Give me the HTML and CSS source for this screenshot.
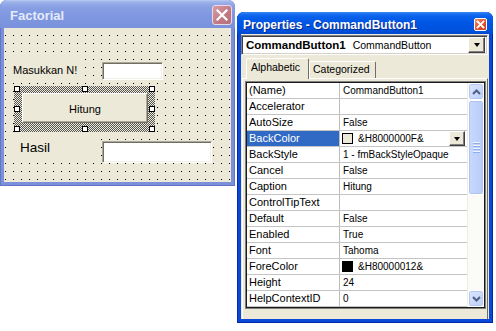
FILE: index.html
```html
<!DOCTYPE html>
<html>
<head>
<meta charset="utf-8">
<link rel="stylesheet" href="styles.css">
</head>
<body>
<div class="win win-form">
  <div class="titlebar tb-inactive">
    <span class="title title-form">Factorial</span>
    <span class="close close-big"><svg width="12" height="12" viewBox="0 0 12 12"><path d="M1.5 1.5L10.5 10.5M10.5 1.5L1.5 10.5" stroke="#fff" stroke-width="2.2" stroke-linecap="square"/></svg></span>
  </div>
  <div class="canvas">
    <div class="ctl lbl lbl-n">Masukkan N!</div>
    <div class="ctl textbox tb-n"></div>
    <div class="ctl sel">
      <div class="cmd">Hitung</div>
      <i class="hd hx0 hy0"></i><i class="hd hx1 hy0"></i><i class="hd hx2 hy0"></i>
      <i class="hd hx0 hy1"></i><i class="hd hx2 hy1"></i>
      <i class="hd hx0 hy2"></i><i class="hd hx1 hy2"></i><i class="hd hx2 hy2"></i>
    </div>
    <div class="ctl lbl lbl-hasil">Hasil</div>
    <div class="ctl textbox tb-hasil"></div>
  </div>
</div>

<div class="win win-props">
  <div class="titlebar tb-active">
    <span class="title title-props">Properties - CommandButton1</span>
    <span class="close close-small"><svg width="9" height="9" viewBox="0 0 9 9"><path d="M1.5 1.5L7.5 7.5M7.5 1.5L1.5 7.5" stroke="#fff" stroke-width="1.8" stroke-linecap="square"/></svg></span>
  </div>
  <div class="pbody">
    <div class="combo">
      <b class="combo-name">CommandButton1</b><span class="combo-type">CommandButton</span>
      <span class="ddbtn combo-dd"><i class="tri"></i></span>
    </div>
    <div class="tabs">
      <div class="tab active">Alphabetic</div>
      <div class="tab">Categorized</div>
    </div>
    <div class="panel">
      <div class="grid">
        <div class="grid-in">
          <div class="rows">
            <div class="row"><div class="k">(Name)</div><div class="v">CommandButton1</div></div>
            <div class="row"><div class="k">Accelerator</div><div class="v"></div></div>
            <div class="row"><div class="k">AutoSize</div><div class="v">False</div></div>
            <div class="row"><div class="k ksel">BackColor</div><div class="v vsw"><i class="sw sw-back"></i><span>&amp;H8000000F&amp;</span><span class="ddbtn val-dd"><i class="tri"></i></span></div></div>
            <div class="row"><div class="k">BackStyle</div><div class="v">1 - fmBackStyleOpaque</div></div>
            <div class="row"><div class="k">Cancel</div><div class="v">False</div></div>
            <div class="row"><div class="k">Caption</div><div class="v">Hitung</div></div>
            <div class="row"><div class="k">ControlTipText</div><div class="v"></div></div>
            <div class="row"><div class="k">Default</div><div class="v">False</div></div>
            <div class="row"><div class="k">Enabled</div><div class="v">True</div></div>
            <div class="row"><div class="k">Font</div><div class="v">Tahoma</div></div>
            <div class="row"><div class="k">ForeColor</div><div class="v vsw"><i class="sw sw-fore"></i><span>&amp;H80000012&amp;</span></div></div>
            <div class="row"><div class="k">Height</div><div class="v">24</div></div>
            <div class="row"><div class="k">HelpContextID</div><div class="v">0</div></div>
          </div>
          <div class="vscroll">
            <div class="sb-btn"><svg width="9" height="6" viewBox="0 0 9 6"><path d="M1 5L4.5 1.5L8 5" fill="none" stroke="#4D6185" stroke-width="2"/></svg></div>
            <div class="sb-thumb"><i></i><i></i><i></i><i></i></div>
            <div class="sb-track"></div>
            <div class="sb-btn"><svg width="9" height="6" viewBox="0 0 9 6"><path d="M1 1L4.5 4.5L8 1" fill="none" stroke="#4D6185" stroke-width="2"/></svg></div>
          </div>
        </div>
      </div>
    </div>
  </div>
</div>
</body>
</html>
```

FILE: styles.css
```css
* { box-sizing: border-box; }
html, body { margin: 0; padding: 0; background: #fff; }
body {
  width: 496px; height: 331px; position: relative; overflow: hidden;
  font-family: "Liberation Sans", Arial, sans-serif; font-size: 11px; color: #000;
}

/* windows on the desktop */
.win { position: absolute; display: flex; flex-direction: column; border-radius: 7px 7px 0 0; padding: 0 4px 4px; }
.win-form { left: 0; top: 0; width: 235px; height: 186px; background: #7B8FDA; box-shadow: inset 1px 0 #6475C8, inset -1px 0 #6475C8, inset 0 -1px #6475C8; }
.win-props { left: 237px; top: 12px; width: 256px; height: 311px; background: #0A48D8; box-shadow: inset 1px 0 #0028A8, inset -1px 0 #0028A8, inset 0 -1px #0028A8; }

.titlebar { margin: 0 -4px; display: flex; align-items: center; justify-content: space-between; border-radius: 7px 7px 0 0; flex: none; }
.tb-inactive {
  height: 28px; padding: 2px 3px 0 10px;
  background: linear-gradient(#BCCBF3 0, #9DB2EA 2px, #889FE3 7px, #7F97E0 16px, #7C94DE 24px, #7A90DA 28px);
}
.tb-active {
  height: 22px; padding: 3px 6px 0 6px;
  background: linear-gradient(#3D8DF6 0, #1A6DF0 2px, #0760EA 5px, #0055E4 11px, #0052DE 18px, #0049CF 22px);
}
.title { font-weight: bold; white-space: nowrap; }
.title-form { font-size: 13px; color: #E4EBFA; }
.title-props { font-size: 12px; color: #fff; text-shadow: 1px 1px #0A2A8A; }

.close { display: flex; align-items: center; justify-content: center; }
.close-big {
  width: 20px; height: 20px; border-radius: 3px; border: 1px solid #E8D9E4;
  background: linear-gradient(135deg, #D79CA6, #C07983 60%, #B3707B);
}
.close-small {
  width: 13px; height: 13px; border-radius: 2px; border: 1px solid #fff;
  background: linear-gradient(135deg, #EE8F6E, #E0502F 55%, #C83A1F);
}

/* form designer canvas */
.canvas { position: relative; flex: 1; background: #ECE9D8; }
.canvas::before {
  content: ""; position: absolute; inset: 0;
  background: repeating-linear-gradient(to right, transparent 0 1px, #000 1px 2px, transparent 2px 8px);
  -webkit-mask-image: repeating-linear-gradient(to bottom, transparent 0 7px, #000 7px 8px);
  mask-image: repeating-linear-gradient(to bottom, transparent 0 7px, #000 7px 8px);
}
.ctl { position: absolute; }
.lbl { background: #ECE9D8; white-space: nowrap; }
.lbl-n { left: 6px; top: 29px; width: 72px; height: 23px; padding: 7px 0 0 3px; line-height: 13px; }
.lbl-hasil { left: 6px; top: 108px; width: 87px; height: 22px; padding: 4px 0 0 10px; font-size: 13.5px; line-height: 15px; }
.textbox {
  background: #fff; border: 1px solid; border-color: #ACA899 #fff #fff #ACA899;
  box-shadow: inset 1px 1px #716F64, inset -1px -1px #F1EFE2;
}
.tb-n { left: 98px; top: 34px; width: 61px; height: 18px; }
.tb-hasil { left: 98px; top: 113px; width: 110px; height: 22px; }

.sel {
  left: 10px; top: 58px; width: 141px; height: 46px; padding: 7px 7px 9px 8px;
  background: repeating-conic-gradient(#555 0 25%, #ECE9D8 0 50%) 0 0 / 2px 2px;
}
.cmd {
  width: 100%; height: 100%; display: flex; align-items: center; justify-content: center;
  background: #ECE9D8; border: 1px solid; border-color: #fff #716F64 #716F64 #fff;
  box-shadow: inset -1px -1px #ACA899; padding-top: 1px;
}
.hd { position: absolute; width: 6px; height: 6px; background: #fff; border: 1px solid #000; }
.hx0 { left: 0; } .hx1 { left: 68px; } .hx2 { left: 135px; }
.hy0 { top: 0; } .hy1 { top: 20px; } .hy2 { top: 40px; }

/* properties window body */
.pbody { flex: 1; background: #ECE9D8; display: flex; flex-direction: column; padding: 1px 1px 0 0; }
.combo {
  height: 20px; flex: none; display: flex; align-items: center; background: #fff;
  border: 1px solid; border-color: #808080 #fff #fff #808080;
  box-shadow: inset 1px 1px #404040, inset -1px -1px #D4D0C8;
  padding: 0 2px 0 4px; white-space: nowrap;
}
.combo-name { font-size: 11.5px; }
.combo-type { font-size: 10.5px; margin-left: 7px; }
.ddbtn {
  display: flex; align-items: center; justify-content: center; background: #ECE9D8;
  border: 1px solid; border-color: #fff #404040 #404040 #fff; box-shadow: inset -1px -1px #808080;
}
.combo-dd { margin-left: auto; width: 17px; height: 16px; }
.tri { width: 0; height: 0; border-left: 3.5px solid transparent; border-right: 3.5px solid transparent; border-top: 4px solid #000; }

.tabs { display: flex; height: 20px; margin-top: 3px; padding-left: 5px; flex: none; align-items: flex-start; }
.tab {
  height: 17px; margin-top: 3px; padding: 0 0 0 3px; line-height: 15px; font-size: 10.5px; width: 67px;
  border: 1px solid; border-bottom: none; border-color: #fff #716F64 transparent #fff;
  border-radius: 2px 2px 0 0; background: #ECE9D8; white-space: nowrap;
}
.tab.active { width: 63px; height: 21px; margin-top: 0; padding-left: 4px; line-height: 17px; position: relative; z-index: 1; }

.panel {
  flex: 1; margin: 0 0 0 1px; border-top: 1px solid #fff; border-left: 1px solid #fff; border-right: 1px solid #716F64;
  padding: 2px 1px 0 2px;
}
.grid { height: 228px; border: 1px solid #808080; }
.grid-in { height: 100%; border: 1px solid #1A1A1A; display: flex; background: #fff; }
.rows { flex: 1; display: flex; flex-direction: column; }
.row { height: 16px; display: flex; border-bottom: 1px solid #C4C4C4; line-height: 15px; white-space: nowrap; }
.k { width: 93px; border-right: 1px solid #BDBDBD; padding-left: 2px; font-size: 11px; overflow: hidden; }
.ksel { background: #316AC5; color: #fff; }
.v { flex: 1; padding-left: 3px; font-size: 10px; display: flex; align-items: center; }
.vsw { padding-left: 2px; }
.sw { width: 11px; height: 11px; border: 1px solid #000; margin-right: 5px; flex: none; }
.sw-back { background: #ECE9D8; }
.sw-fore { background: #000; }
.val-dd { margin-left: auto; margin-right: 2px; width: 16px; height: 15px; }

.vscroll { width: 17px; display: flex; flex-direction: column; background: #FBFBF7; border-left: 1px solid #EEEDE5; }
.sb-btn {
  height: 17px; flex: none; display: flex; align-items: center; justify-content: center;
  background: linear-gradient(135deg, #DCE6FD, #BCCFFA); border: 1px solid #fff; border-radius: 3px;
  box-shadow: inset 0 0 0 1px #B5C8F4;
}
.sb-thumb {
  height: 95px; flex: none; display: flex; flex-direction: column; align-items: center; justify-content: center; gap: 1px;
  background: linear-gradient(to right, #C9D8FC, #BFD1FB 60%, #B7CBF8); border: 1px solid #fff; border-radius: 3px;
  box-shadow: inset 0 0 0 1px #AFC4F3;
}
.sb-thumb i { width: 7px; background: #EEF4FE; border-bottom: 1px solid #8EAEF0; height: 2px; }
.sb-track { flex: 1; }
```
